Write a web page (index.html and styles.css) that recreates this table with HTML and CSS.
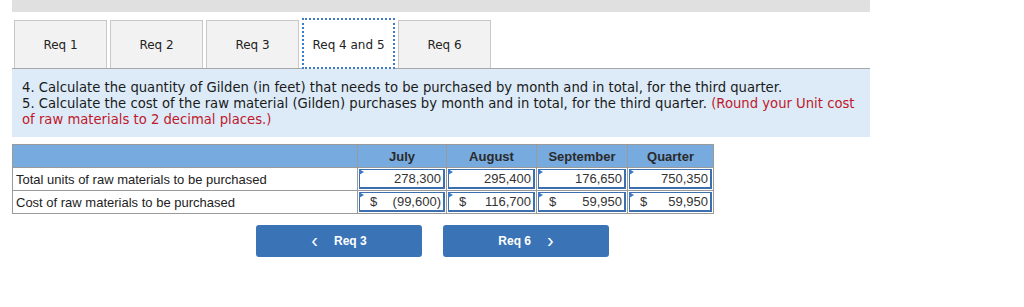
FILE: index.html
```html
<!DOCTYPE html>
<html>
<head>
<meta charset="utf-8">
<link rel="stylesheet" href="styles.css">
</head>
<body>
<div class="wrap">
  <div class="topbar"></div>
  <div class="tabs">
    <div class="tab">Req 1</div>
    <div class="tab">Req 2</div>
    <div class="tab">Req 3</div>
    <div class="tab active">Req 4 and 5</div>
    <div class="tab">Req 6</div>
  </div>
  <div class="question">
    <p>4. Calculate the quantity of Gilden (in feet) that needs to be purchased by month and in total, for the third quarter.</p>
    <p>5. Calculate the cost of the raw material (Gilden) purchases by month and in total, for the third quarter. <span class="red">(Round your Unit cost</span> <span class="red">of raw materials to 2 decimal places.)</span></p>
  </div>
  <table class="grid">
    <colgroup>
      <col class="c-label"><col class="c-july"><col class="c-aug"><col class="c-sep"><col class="c-q">
    </colgroup>
    <thead>
      <tr><th></th><th>July</th><th>August</th><th>September</th><th>Quarter</th></tr>
    </thead>
    <tbody>
      <tr>
        <td class="label">Total units of raw materials to be purchased</td>
        <td class="in"><div class="box"><span class="num">278,300</span></div></td>
        <td class="in"><div class="box"><span class="num">295,400</span></div></td>
        <td class="in"><div class="box"><span class="num">176,650</span></div></td>
        <td class="in"><div class="box"><span class="num">750,350</span></div></td>
      </tr>
      <tr>
        <td class="label">Cost of raw materials to be purchased</td>
        <td class="in"><div class="box"><span class="cur">$</span><span class="num">(99,600)</span></div></td>
        <td class="in"><div class="box"><span class="cur">$</span><span class="num">116,700</span></div></td>
        <td class="in"><div class="box"><span class="cur">$</span><span class="num">59,950</span></div></td>
        <td class="in"><div class="box"><span class="cur">$</span><span class="num">59,950</span></div></td>
      </tr>
    </tbody>
  </table>
  <div class="nav">
    <div class="btn"><span class="chev">&lsaquo;</span>Req 3</div>
    <div class="btn">Req 6<span class="chev right">&rsaquo;</span></div>
  </div>
</div>
</body>
</html>
```

FILE: styles.css
```css
html, body {
  margin: 0;
  padding: 0;
  background: #ffffff;
}
.wrap {
  margin-left: 12px;
  width: 858px;
}
.topbar {
  height: 12px;
  background: #e0e0e0;
}
.tabs {
  display: flex;
  gap: 3px;
  padding-left: 2px;
  margin-top: 8px;
  height: 48px;
  border-bottom: 1px solid #a8a8a8;
  align-items: flex-end;
}
.tab {
  box-sizing: border-box;
  width: 93px;
  height: 48px;
  background: #f2f2f2;
  border: 1px solid #c8c8c8;
  border-bottom: none;
  display: flex;
  align-items: center;
  justify-content: center;
  font-family: "DejaVu Sans", Verdana, sans-serif;
  font-size: 12px;
  color: #222;
}
.tab.active {
  background: #ffffff;
  border: none;
  height: 51px;
  margin-bottom: -1px;
  padding-top: 2px;
  outline: 2px dotted #3f7cc6;
  outline-offset: -2px;
}
.question {
  background: #dcebf7;
  padding: 11px 10px 9px 10px;
  font-family: "DejaVu Sans", Verdana, sans-serif;
  font-size: 13.2px;
  line-height: 16px;
  color: #1a1a1a;
}
.question p {
  margin: 0;
}
.red {
  color: #c0182b;
}
.grid {
  margin-top: 7px;
  border-collapse: collapse;
  font-family: "Liberation Sans", Arial, sans-serif;
  font-size: 13px;
  color: #222;
  table-layout: fixed;
  width: 701px;
}
.c-label { width: 345px; }
.c-july { width: 89px; }
.c-aug { width: 90px; }
.c-sep { width: 91px; }
.c-q { width: 86px; }
.grid th {
  background: #77abe0;
  border: 1px solid #9a9a9a;
  height: 22px;
  padding: 0;
  font-weight: bold;
  font-size: 13px;
  color: #2a2a2a;
  text-align: center;
}
.grid td {
  border: 1px solid #9a9a9a;
  height: 22px;
  padding: 0;
  box-sizing: border-box;
}
.grid td.label {
  padding-left: 3px;
  white-space: nowrap;
}
.grid td.in {
  padding: 1px;
}
.box {
  position: relative;
  box-sizing: border-box;
  height: 20px;
  border-style: solid;
  border-color: #3b6fae;
  border-width: 1px 2px 2px 1px;
  background: #fff;
  display: flex;
  align-items: center;
  padding: 0 2px 0 10px;
  font-size: 13px;
  color: #333;
}
.box::before {
  content: "";
  position: absolute;
  left: -1px;
  top: -1px;
  width: 0;
  height: 0;
  border-left: 5px solid #3b78c8;
  border-top: 3px solid transparent;
  border-bottom: 3px solid transparent;
}
.box .num {
  margin-left: auto;
}
.nav {
  display: flex;
  gap: 21px;
  margin-top: 11px;
  margin-left: 244px;
}
.btn {
  width: 166px;
  height: 32px;
  background: #3a74b6;
  border-radius: 3px;
  color: #fff;
  font-family: "Liberation Sans", Arial, sans-serif;
  font-weight: bold;
  font-size: 12px;
  display: flex;
  align-items: center;
  justify-content: center;
}
.chev {
  font-size: 20px;
  font-weight: normal;
  line-height: 1;
  margin-right: 16px;
  margin-top: -3px;
}
.chev.right {
  margin-right: 0;
  margin-left: 16px;
}
```
